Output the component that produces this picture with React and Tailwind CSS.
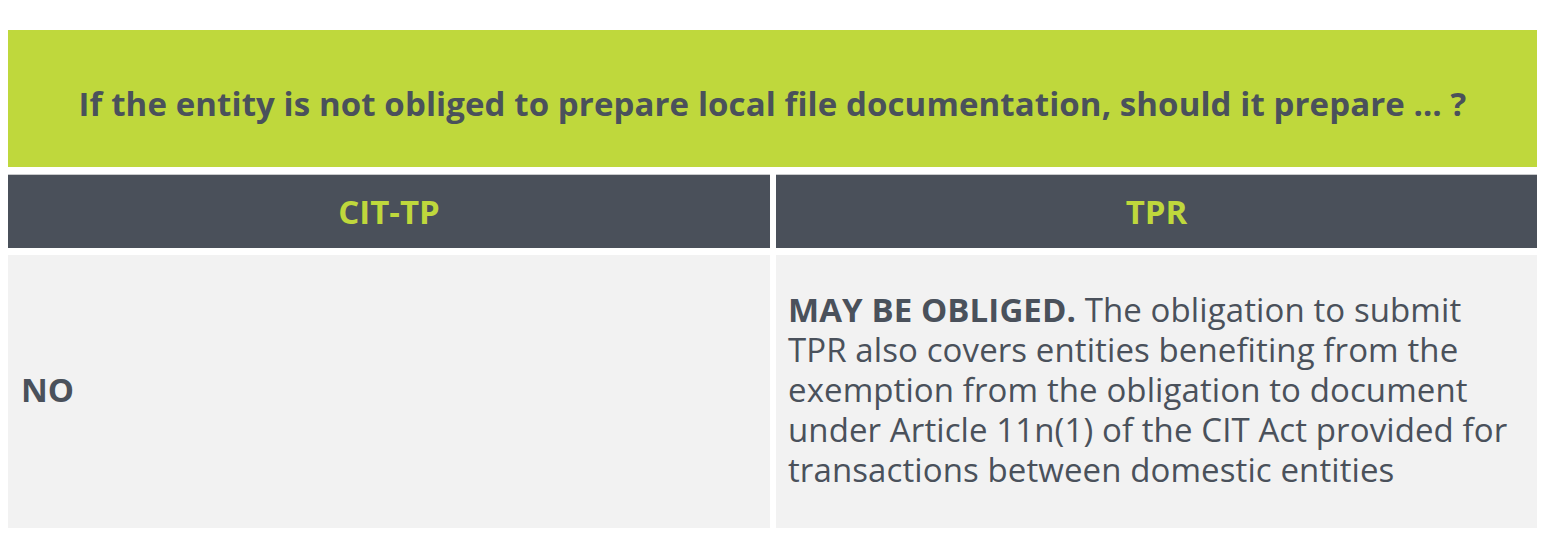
import React from 'react';

export default function App() {
  return (
    <div className="min-h-screen bg-white pt-[30px] px-2 font-['Open_Sans',sans-serif] text-[#4a515b]">
      {/* Question banner */}
      <div className="h-[137px] bg-[#bfd83c] flex items-center justify-center pt-[10px]">
        <h2 className="text-[33px] font-bold leading-none tracking-[0.1px]">
          If the entity is not obliged to prepare local file documentation, should it prepare … ?
        </h2>
      </div>

      {/* Column headers */}
      <div className="mt-[7px] grid grid-cols-[762px_1fr] gap-[6px]">
        <div className="h-[74px] bg-[#4a505a] border-t border-[#c9cacc] flex items-center justify-center">
          <span className="text-[33px] font-bold text-[#bfd83c]">CIT-TP</span>
        </div>
        <div className="h-[74px] bg-[#4a505a] border-t border-[#c9cacc] flex items-center justify-center">
          <span className="text-[33px] font-bold text-[#bfd83c]">TPR</span>
        </div>
      </div>

      {/* Answers */}
      <div className="mt-[7px] grid grid-cols-[762px_1fr] gap-[6px]">
        <div className="h-[273px] bg-[#f2f2f2] flex items-center px-[13px] pb-[4px]">
          <span className="text-[33px] font-bold">NO</span>
        </div>
        <div className="h-[273px] bg-[#f2f2f2] flex items-center px-3 pb-[4px]">
          <p className="text-[33px] leading-[40px] tracking-[0.1px]">
            <span className="font-bold">MAY BE OBLIGED.</span> The obligation to submit TPR also covers entities benefiting from the exemption from the obligation to document under Article 11n(1) of the CIT Act provided for transactions between domestic entities
          </p>
        </div>
      </div>
    </div>
  );
}
